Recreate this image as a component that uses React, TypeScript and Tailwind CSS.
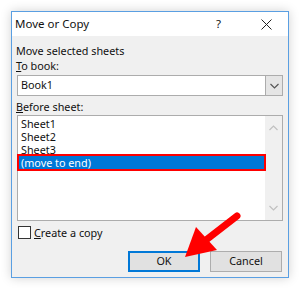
import React from 'react';

const font = { fontFamily: '"Noto Sans", "DejaVu Sans", sans-serif' };

const Chevron = ({ up, color }: { up?: boolean; color: string }) => (
  <svg width="9" height="6" viewBox="0 0 9 6">
    <path
      d={up ? 'M0.5 5 L4.5 1 L8.5 5' : 'M0.5 1 L4.5 5 L8.5 1'}
      fill="none"
      stroke={color}
      strokeWidth="1.2"
    />
  </svg>
);

const sheets = ['Sheet1', 'Sheet2', 'Sheet3'];

export default function App() {
  return (
    <div className="relative w-[300px] h-[289px] bg-white text-[10.8px] text-[#111] overflow-hidden" style={font}>
      <div className="ml-[11px] mt-[11px] w-[278px] h-[267px] border border-[#5a9fe2] bg-[#f0f0f0] flex flex-col shadow-[0_0_10px_rgba(0,0,0,0.18)]">
        {/* title bar */}
        <div className="h-[24px] bg-white flex items-center pl-[3px] shrink-0">
          <span className="text-[11.5px]">Move or Copy</span>
          <span className="ml-auto mr-[40px] text-[11.5px]">?</span>
          <svg width="11" height="11" viewBox="0 0 11 11" className="mr-[16px]">
            <path d="M0.5 0.5 L10.5 10.5 M10.5 0.5 L0.5 10.5" stroke="#222" strokeWidth="1" />
          </svg>
        </div>

        <div className="flex flex-col px-[4px] pt-[7px] flex-1">
          <div className="leading-[15px]">Move selected sheets</div>
          <div className="leading-[15px]">
            <span className="underline">T</span>o book:
          </div>

          {/* combobox */}
          <div className="mt-[2px] ml-[1px] mr-[1px] h-[21px] bg-white border border-[#acacac] flex items-center">
            <span className="pl-[3px] flex-1">Book1</span>
            <div className="w-[17px] h-full bg-[#e5e5e5] border-l border-[#acacac] flex items-center justify-center">
              <Chevron color="#555" />
            </div>
          </div>

          <div className="mt-[3px] leading-[15px]">
            <span className="underline">B</span>efore sheet:
          </div>

          {/* list box */}
          <div className="mt-[1px] ml-[1px] mr-[1px] h-[106px] bg-white border border-[#acacac] flex">
            <div className="flex-1 flex flex-col pt-[1px]">
              {sheets.map((s) => (
                <div key={s} className="h-[13px] leading-[13px] pl-[3px]">
                  {s}
                </div>
              ))}
              <div className="relative h-[13px] leading-[13px] pl-[3px] bg-[#0078d7] text-white">
                (move to end)
                <span className="absolute -inset-x-[1px] -inset-y-[2px] border-2 border-[#ff0000]" />
              </div>
            </div>
            <div className="w-[17px] bg-[#f0f0f0] flex flex-col items-center justify-between py-[9px]">
              <Chevron up color="#c0c0c0" />
              <Chevron color="#c0c0c0" />
            </div>
          </div>

          {/* checkbox */}
          <div className="mt-[5px] ml-[2px] flex items-center gap-[3px]">
            <div className="w-[13px] h-[13px] bg-white border border-[#333]" />
            <span className="leading-[13px]">
              <span className="underline">C</span>reate a copy
            </span>
          </div>

          {/* buttons */}
          <div className="mt-[12px] flex justify-end gap-[10px] pr-[2px]">
            <div className="w-[72px] h-[21px] bg-[#e1e1e1] border-2 border-[#0078d7] flex items-center justify-center">
              OK
            </div>
            <div className="w-[72px] h-[21px] bg-[#e1e1e1] border border-[#adadad] flex items-center justify-center">
              Cancel
            </div>
          </div>
        </div>
      </div>

      {/* red annotation arrow */}
      <svg className="absolute left-0 top-0 pointer-events-none" width="300" height="289" viewBox="0 0 300 289">
        <line x1="237" y1="216" x2="206" y2="240" stroke="#ff0000" strokeWidth="7" strokeLinecap="round" />
        <polygon points="185,257 196,227 217,250" fill="#ff0000" />
      </svg>
    </div>
  );
}
